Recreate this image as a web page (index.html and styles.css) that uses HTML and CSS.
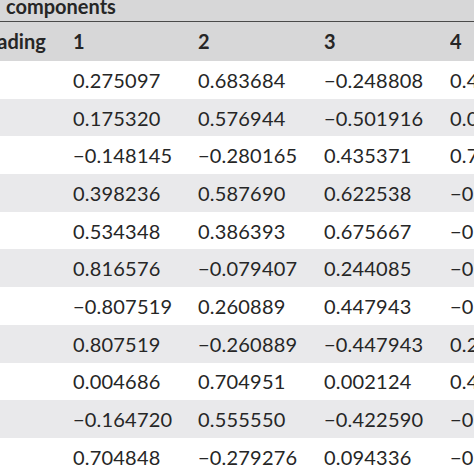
FILE: index.html
```html
<!DOCTYPE html>
<html lang="en">
<head>
  <meta charset="UTF-8">
  <meta name="viewport" content="width=device-width, initial-scale=1.0">
  <title>Principal component loadings</title>
  <link rel="stylesheet" href="styles.css">
</head>
<body>

  <!-- Loadings table, cropped view -->
  <div class="frame">
    <table class="loadings">
      <colgroup>
        <col class="c-name">
        <col class="c-1">
        <col class="c-num">
        <col class="c-num">
        <col class="c-num">
      </colgroup>
      <thead>
        <tr class="caption-row">
          <th colspan="5">components</th>
        </tr>
        <tr class="head-row">
          <th>Loading</th>
          <th>1</th>
          <th>2</th>
          <th>3</th>
          <th>4</th>
        </tr>
      </thead>
      <tbody>
        <tr><td></td><td>0.275097</td><td>0.683684</td><td>&minus;0.248808</td><td>0.412356</td></tr>
        <tr><td></td><td>0.175320</td><td>0.576944</td><td>&minus;0.501916</td><td>0.027413</td></tr>
        <tr><td></td><td>&minus;0.148145</td><td>&minus;0.280165</td><td>0.435371</td><td>0.713402</td></tr>
        <tr><td></td><td>0.398236</td><td>0.587690</td><td>0.622538</td><td>&minus;0.031277</td></tr>
        <tr><td></td><td>0.534348</td><td>0.386393</td><td>0.675667</td><td>&minus;0.052981</td></tr>
        <tr><td></td><td>0.816576</td><td>&minus;0.079407</td><td>0.244085</td><td>&minus;0.061045</td></tr>
        <tr><td></td><td>&minus;0.807519</td><td>0.260889</td><td>0.447943</td><td>&minus;0.245370</td></tr>
        <tr><td></td><td>0.807519</td><td>&minus;0.260889</td><td>&minus;0.447943</td><td>0.245370</td></tr>
        <tr><td></td><td>0.004686</td><td>0.704951</td><td>0.002124</td><td>0.401137</td></tr>
        <tr><td></td><td>&minus;0.164720</td><td>0.555550</td><td>&minus;0.422590</td><td>&minus;0.038214</td></tr>
        <tr><td></td><td>0.704848</td><td>&minus;0.279276</td><td>0.094336</td><td>&minus;0.015809</td></tr>
      </tbody>
    </table>
  </div>

</body>
</html>
```

FILE: styles.css
```css
* {
  box-sizing: border-box;
}

body {
  margin: 0;
  background: #fff;
  font-family: 'Lato', 'Liberation Sans', sans-serif;
  color: #262626;
  overflow: hidden;
}

.frame {
  width: 474px;
  height: 474px;
  overflow: hidden;
}

.loadings {
  margin-left: -24px;
  border-collapse: collapse;
  table-layout: fixed;
  width: 600px;
  font-size: 20px;
}

.c-name { width: 97px; }
.c-1 { width: 125px; }
.c-num { width: 126px; }

.loadings th,
.loadings td {
  padding: 0;
  text-align: left;
  white-space: nowrap;
  overflow: hidden;
}

/* title strip above the column header */
.caption-row th {
  height: 21px;
  padding-left: 30px;
  background: #d7d7d8;
  font-weight: 700;
  line-height: 12px;
  vertical-align: top;
  border-bottom: 1.5px solid #4a4a4a;
}

.head-row th {
  height: 40px;
  background: #d7d7d8;
  font-weight: 700;
  vertical-align: middle;
}

.loadings tbody tr {
  height: 37.7px;
}

.loadings tbody tr:nth-child(even) {
  background: #e9e9eb;
}

.loadings td {
  vertical-align: middle;
  letter-spacing: 0.2px;
}
```
